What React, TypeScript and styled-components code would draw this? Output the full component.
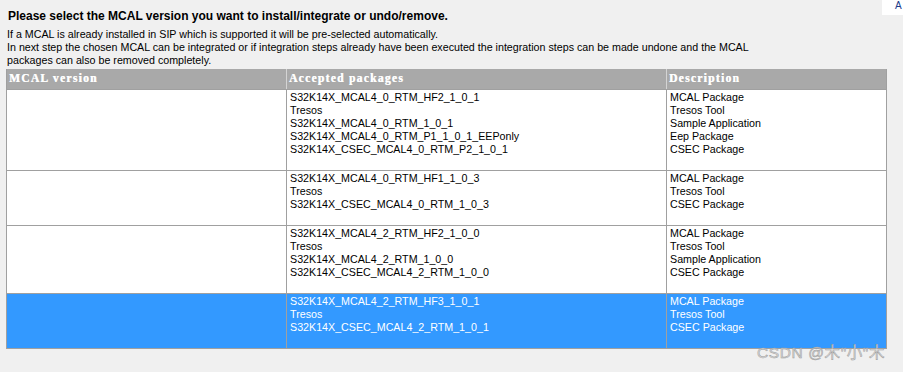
import React from "react";
import styled, { createGlobalStyle } from "styled-components";

const Global = createGlobalStyle`
  html, body { margin: 0; padding: 0; background: #f0f0f0; }
  body { font-family: "Liberation Sans", Arial, sans-serif; }
`;

const Page = styled.div`
  position: relative;
  width: 903px;
  height: 372px;
  overflow: hidden;
  background: #f0f0f0;
  padding: 9px 0 0 6px;
  box-sizing: border-box;
`;

const Title = styled.div`
  font-family: "Liberation Sans", Arial, sans-serif;
  font-weight: bold;
  font-size: 12px;
  line-height: 15px;
  color: #000;
  padding-left: 2px;
`;

const Info = styled.div`
  margin-top: 4px;
  font-family: "Liberation Sans", Arial, sans-serif;
  font-size: 10.7px;
  line-height: 13px;
  color: #000;
  padding-left: 1px;
  width: 760px;
`;

const Table = styled.div`
  margin-top: 2px;
  width: 881px;
  border-right: 1px solid #a0a0a0;
  border-bottom: 1px solid #a0a0a0;
  box-sizing: border-box;
`;

const Grid = styled.div`
  display: grid;
  grid-template-columns: 280px 380px 220px;
`;

const HeadCell = styled.div<{ $first?: boolean }>`
  height: 20px;
  background: #a9a9a9;
  border-left: 1px solid ${(p) => (p.$first ? "#a0a0a0" : "#d4d4d4")};
  box-sizing: border-box;
  font-family: "Liberation Serif", "Times New Roman", serif;
  font-weight: bold;
  font-size: 11.5px;
  letter-spacing: 1.3px;
  line-height: 19px;
  color: #fff;
  text-shadow: 0.4px 0 0 #f4f4f4;
  padding-left: 2px;
  white-space: nowrap;
`;

const Cell = styled.div<{ $sel?: boolean }>`
  border-left: 1px solid #a0a0a0;
  border-top: 1px solid #a0a0a0;
  box-sizing: border-box;
  background: ${(p) => (p.$sel ? "#3399ff" : "#fff")};
  color: ${(p) => (p.$sel ? "#fff" : "#000")};
  padding: 1px 0 14px 3px;
  font-family: "Liberation Sans", Arial, sans-serif;
  font-size: 10.7px;
  line-height: 13px;
  white-space: nowrap;
`;

const Line = styled.div``;

const Corner = styled.div`
  position: absolute;
  top: 0;
  right: 0;
  width: 21px;
  height: 15px;
  background: #fff;
  font-family: "Liberation Sans", Arial, sans-serif;
  font-size: 10px;
  line-height: 11px;
  color: #1a3a8a;
  padding-left: 13px;
  box-sizing: border-box;
`;

const Watermark = styled.div`
  position: absolute;
  left: 757px;
  top: 344px;
  font-family: "Liberation Sans", "Noto Sans CJK SC", sans-serif;
  font-size: 15.5px;
  letter-spacing: 0.6px;
  line-height: 18px;
  color: #dadada;
  -webkit-text-stroke: 0.5px #9a9a9a;
  white-space: nowrap;
`;

const rows: { pkgs: string[]; desc: string[]; sel?: boolean }[] = [
  {
    pkgs: [
      "S32K14X_MCAL4_0_RTM_HF2_1_0_1",
      "Tresos",
      "S32K14X_MCAL4_0_RTM_1_0_1",
      "S32K14X_MCAL4_0_RTM_P1_1_0_1_EEPonly",
      "S32K14X_CSEC_MCAL4_0_RTM_P2_1_0_1",
    ],
    desc: ["MCAL Package", "Tresos Tool", "Sample Application", "Eep Package", "CSEC Package"],
  },
  {
    pkgs: ["S32K14X_MCAL4_0_RTM_HF1_1_0_3", "Tresos", "S32K14X_CSEC_MCAL4_0_RTM_1_0_3"],
    desc: ["MCAL Package", "Tresos Tool", "CSEC Package"],
  },
  {
    pkgs: [
      "S32K14X_MCAL4_2_RTM_HF2_1_0_0",
      "Tresos",
      "S32K14X_MCAL4_2_RTM_1_0_0",
      "S32K14X_CSEC_MCAL4_2_RTM_1_0_0",
    ],
    desc: ["MCAL Package", "Tresos Tool", "Sample Application", "CSEC Package"],
  },
  {
    pkgs: ["S32K14X_MCAL4_2_RTM_HF3_1_0_1", "Tresos", "S32K14X_CSEC_MCAL4_2_RTM_1_0_1"],
    desc: ["MCAL Package", "Tresos Tool", "CSEC Package"],
    sel: true,
  },
];

export default function App() {
  return (
    <>
      <Global />
      <Page>
        <Title>Please select the MCAL version you want to install/integrate or undo/remove.</Title>
        <Info>
          <Line>If a MCAL is already installed in SIP which is supported it will be pre-selected automatically.</Line>
          <Line>
            In next step the chosen MCAL can be integrated or if integration steps already have been executed the
            integration steps can be made undone and the MCAL
          </Line>
          <Line>packages can also be removed completely.</Line>
        </Info>
        <Table>
          <Grid>
            <HeadCell $first>MCAL version</HeadCell>
            <HeadCell>Accepted packages</HeadCell>
            <HeadCell>Description</HeadCell>
            {rows.map((r, i) => (
              <React.Fragment key={i}>
                <Cell $sel={r.sel} />
                <Cell $sel={r.sel}>
                  {r.pkgs.map((p) => (
                    <Line key={p}>{p}</Line>
                  ))}
                </Cell>
                <Cell $sel={r.sel}>
                  {r.desc.map((d) => (
                    <Line key={d}>{d}</Line>
                  ))}
                </Cell>
              </React.Fragment>
            ))}
          </Grid>
        </Table>
        <Corner>A</Corner>
        <Watermark>CSDN @木"小"木</Watermark>
      </Page>
    </>
  );
}
